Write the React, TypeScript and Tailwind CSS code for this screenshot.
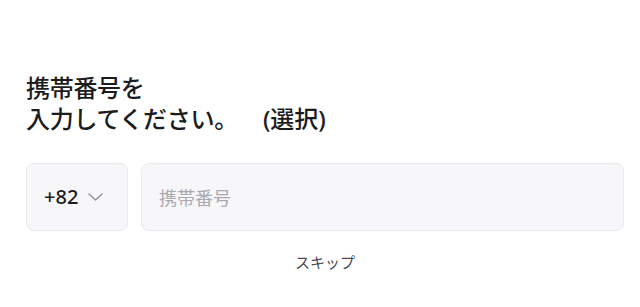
import React from "react";

export default function App() {
  return (
    <div
      className="w-[640px] h-[307px] bg-white flex flex-col px-[26px] pr-[16px] pt-[72px]"
      style={{ fontFamily: '"Noto Sans", "Noto Sans CJK JP", sans-serif' }}
    >
      <h1 className="text-[24px] leading-[31px] font-medium text-[#1c1c1e] tracking-[-0.3px]">
        携帯番号を
        <br />
        入力してください。<span className="ml-[25px] tracking-[0px]">(選択)</span>
      </h1>
      <div className="flex gap-[13px] mt-[29px] h-[68px]">
        <button className="w-[102px] h-full rounded-[8px] border border-[#e9e9ee] bg-[#f7f7f9] flex items-center pl-[17px] gap-[10px]">
          <span className="text-[20px] font-medium text-[#1c1c1e]">+82</span>
          <svg width="15" height="8" viewBox="0 0 15 8" fill="none">
            <path d="M1 1L7.5 7L14 1" stroke="#8e8e96" strokeWidth="1.3" strokeLinecap="round" strokeLinejoin="round" />
          </svg>
        </button>
        <div className="flex-1 h-full rounded-[8px] border border-[#e9e9ee] bg-[#f7f7f9] flex items-center pl-[17px]">
          <span className="text-[18px] text-[#a9a9b1] pt-[2px]">携帯番号</span>
        </div>
      </div>
      <div className="mt-[20px] text-center text-[15px] leading-[22px] text-[#4a4a50]">スキップ</div>
    </div>
  );
}
